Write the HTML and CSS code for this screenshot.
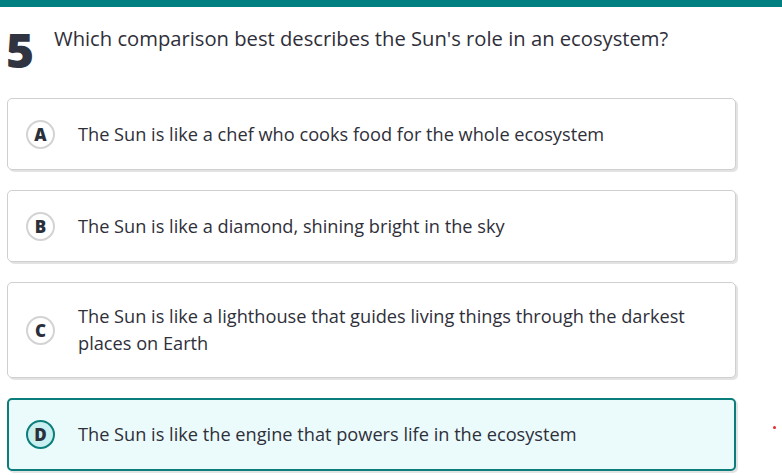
FILE: index.html
```html
<!DOCTYPE html>
<html>
<head>
<meta charset="utf-8">
<link rel="stylesheet" href="styles.css">
</head>
<body>
<div class="topbar"></div>
<div class="page">
  <div class="question">
    <div class="qnum">5</div>
    <div class="qtext">Which comparison best describes the Sun's role in an ecosystem?</div>
  </div>
  <div class="options">
    <div class="option">
      <div class="letter">A</div>
      <div class="otext">The Sun is like a chef who cooks food for the whole ecosystem</div>
    </div>
    <div class="option">
      <div class="letter">B</div>
      <div class="otext">The Sun is like a diamond, shining bright in the sky</div>
    </div>
    <div class="option">
      <div class="letter">C</div>
      <div class="otext">The Sun is like a lighthouse that guides living things through the darkest places on Earth</div>
    </div>
    <div class="option selected">
      <div class="letter">D</div>
      <div class="otext">The Sun is like the engine that powers life in the ecosystem</div>
    </div>
  </div>
  <div class="dot"></div>
</div>
</body>
</html>
```
FILE: styles.css
```css
html, body {
  margin: 0;
  padding: 0;
  background: #fff;
}
body {
  font-family: "Open Sans", "Lato", sans-serif;
  color: #2f2f3a;
  width: 782px;
  height: 475px;
  overflow: hidden;
}
.topbar {
  height: 7px;
  background: #008080;
}
.page {
  position: relative;
  padding: 0 46px 0 7px;
}
.question {
  display: flex;
  align-items: flex-start;
  padding-top: 18px;
  height: 69px;
  box-sizing: border-box;
}
.qnum {
  font-size: 48px;
  font-weight: 800;
  line-height: 50px;
  width: 48px;
  margin-left: -1px;
  color: #2f3440;
}
.qtext {
  font-size: 20.2px;
  line-height: 26px;
  padding-top: 0;
}
.options {
  margin-top: 22px;
  display: flex;
  flex-direction: column;
  gap: 20px;
}
.option {
  display: flex;
  align-items: center;
  border: 1px solid #cfcfcf;
  border-radius: 5px;
  box-shadow: 2px 2px 0 #e3e3e3;
  padding: 20px 40px 20px 18px;
  min-height: 72px;
  box-sizing: border-box;
  background: #fff;
}
.letter {
  width: 25px;
  height: 25px;
  border: 2px solid #d3d3d3;
  border-radius: 50%;
  display: flex;
  align-items: center;
  justify-content: center;
  font-weight: 800;
  font-size: 17px;
  line-height: 1;
  flex: none;
  margin-right: 23px;
  color: #2a2f3a;
}
.otext {
  font-size: 18.2px;
  line-height: 27px;
}
.option.selected {
  border: 2px solid #0b7d7b;
  background: #ebfbfc;
  padding: 19px 39px 19px 17px;
  min-height: 73px;
}
.option.selected .letter {
  border-color: #0b7d7b;
  background: #c9eff0;
}
.dot {
  position: absolute;
  left: 773px;
  top: 419px;
  width: 3px;
  height: 3px;
  border-radius: 50%;
  background: #e8262c;
}
```
